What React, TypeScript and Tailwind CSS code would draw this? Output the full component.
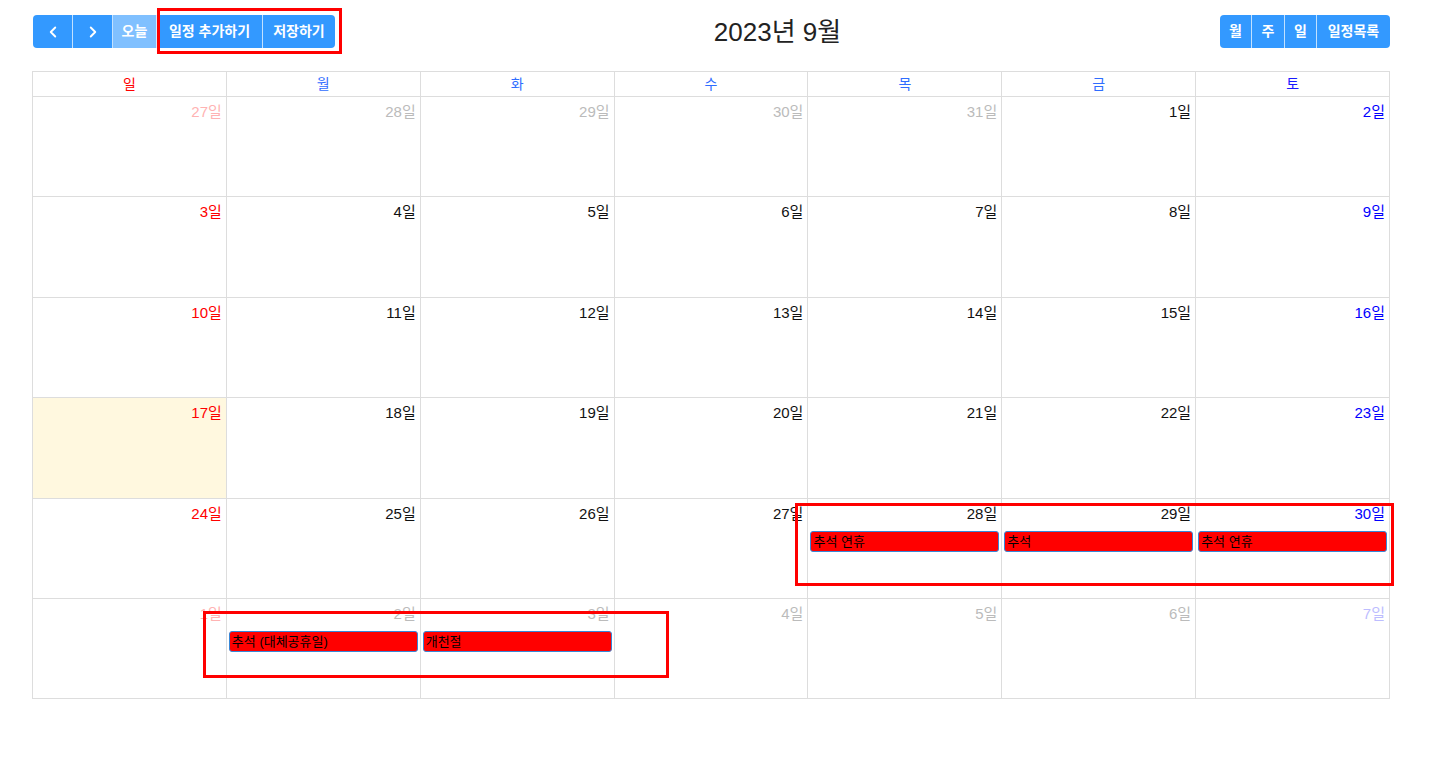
import { ChevronLeft, ChevronRight } from "lucide-react";

type Cell = {
  day: number;
  other: boolean;
  today?: boolean;
  events?: string[];
};

const weekdays = ["일", "월", "화", "수", "목", "금", "토"];

const events: Record<string, string[]> = {
  "9-28": ["추석 연휴"],
  "9-29": ["추석"],
  "9-30": ["추석 연휴"],
  "10-2": ["추석 (대체공휴일)"],
  "10-3": ["개천절"],
};

function buildWeeks(): Cell[][] {
  const cells: Cell[] = [];
  for (let d = 27; d <= 31; d++) cells.push({ day: d, other: true });
  for (let d = 1; d <= 30; d++)
    cells.push({
      day: d,
      other: false,
      today: d === 17,
      events: events[`9-${d}`],
    });
  for (let d = 1; d <= 7; d++)
    cells.push({ day: d, other: true, events: events[`10-${d}`] });
  const weeks: Cell[][] = [];
  for (let i = 0; i < cells.length; i += 7) weeks.push(cells.slice(i, i + 7));
  return weeks;
}

function headColor(i: number) {
  if (i === 0) return "text-[#ff0000]";
  if (i === 6) return "text-[#1a1aff]";
  return "text-[#2f6dff]";
}

function dayColor(i: number, other: boolean) {
  if (i === 0) return other ? "text-[#ffb3b3]" : "text-[#ff0000]";
  if (i === 6) return other ? "text-[#bdbdff]" : "text-[#0000ff]";
  return other ? "text-[#bbbbbb]" : "text-[#111111]";
}

const btn =
  "h-[33px] flex items-center justify-center text-white text-[14px] font-bold border-r border-white/70 last:border-r-0";

export default function App() {
  const weeks = buildWeeks();

  return (
    <div
      className="relative min-h-[771px] bg-white px-[32px] pt-[15px]"
      style={{ fontFamily: '"Liberation Sans", "Noto Sans CJK KR", sans-serif' }}
    >
      {/* Toolbar */}
      <div className="flex items-center justify-between">
        <div className="flex pl-[1px]">
          <div className="flex rounded-[4px] overflow-hidden">
            <button className={`${btn} w-[40px] bg-[#3399ff]`}>
              <ChevronLeft className="w-[18px] h-[18px]" strokeWidth={2.5} />
            </button>
            <button className={`${btn} w-[40px] bg-[#3399ff]`}>
              <ChevronRight className="w-[18px] h-[18px]" strokeWidth={2.5} />
            </button>
            <button className={`${btn} w-[44px] bg-[#80c0ff]`}>오늘</button>
            <button className={`${btn} w-[106px] bg-[#3399ff]`}>일정 추가하기</button>
            <button className={`${btn} w-[72px] bg-[#3399ff]`}>저장하기</button>
          </div>
        </div>
        <h2 className="text-[26px] text-[#222222] leading-none">2023년 9월</h2>
        <div className="flex rounded-[4px] overflow-hidden mr-[18px]">
          <button className={`${btn} w-[32px] bg-[#3399ff]`}>월</button>
          <button className={`${btn} w-[33px] bg-[#3399ff]`}>주</button>
          <button className={`${btn} w-[32px] bg-[#3399ff]`}>일</button>
          <button className={`${btn} w-[73px] bg-[#3399ff]`}>일정목록</button>
        </div>
      </div>

      {/* Calendar */}
      <div className="mt-[23px] w-[1358px] border-l border-t border-[#dddddd]">
        <div className="grid grid-cols-7">
          {weekdays.map((w, i) => (
            <div
              key={w}
              className={`h-[25px] flex items-center justify-center border-r border-b border-[#dddddd] text-[14px] ${headColor(i)}`}
            >
              {w}
            </div>
          ))}
        </div>
        {weeks.map((week, wi) => (
          <div key={wi} className="grid grid-cols-7">
            {week.map((c, i) => (
              <div
                key={i}
                className={`h-[100.4px] border-r border-b border-[#dddddd] ${c.today ? "bg-[#fff8df]" : ""}`}
              >
                <div
                  className={`h-[32px] pt-[5px] pr-[4px] text-right text-[15px] leading-[20px] ${dayColor(i, c.other)}`}
                >
                  {c.day}일
                </div>
                {c.events?.map((e) => (
                  <div
                    key={e}
                    className="mx-[2px] h-[21px] rounded-[3px] border border-[#3788d8] bg-[#ff0000] px-[2px] text-[13px] leading-[19px] text-black"
                  >
                    {e}
                  </div>
                ))}
              </div>
            ))}
          </div>
        ))}
      </div>

      {/* Annotation boxes */}
      <div className="absolute left-[157px] top-[8px] w-[185px] h-[46px] border-[3px] border-[#ff0000]" />
      <div className="absolute left-[795px] top-[503px] w-[599px] h-[83px] border-[3px] border-[#ff0000]" />
      <div className="absolute left-[203px] top-[611px] w-[466px] h-[67px] border-[3px] border-[#ff0000]" />
    </div>
  );
}
